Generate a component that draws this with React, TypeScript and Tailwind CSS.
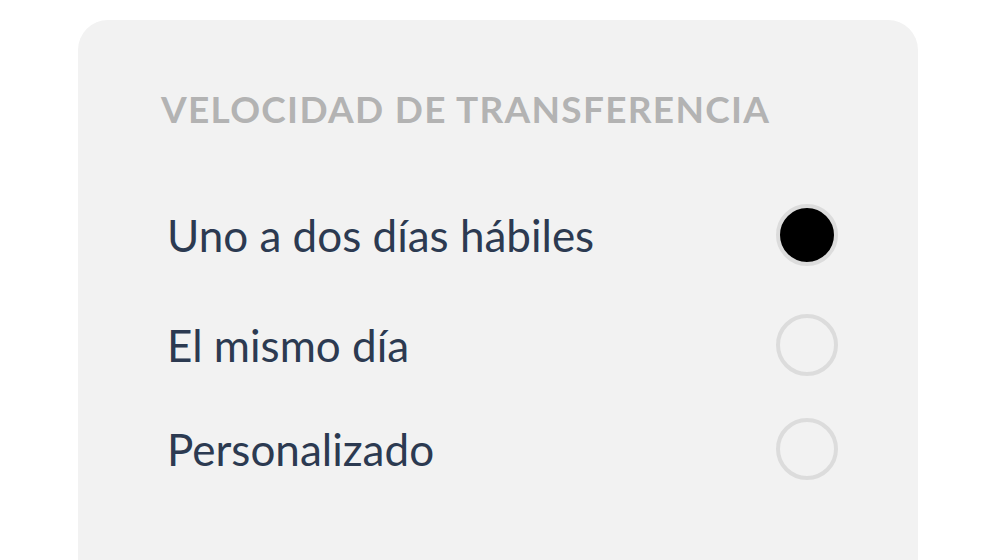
import React, { useState } from "react";

const options = ["Uno a dos días hábiles", "El mismo día", "Personalizado"];

const App: React.FC = () => {
  const [selected, setSelected] = useState<number>(0);

  return (
    <div className="min-h-[560px] bg-white pt-[20px] px-[78px] font-['Lato','Liberation_Sans',sans-serif]">
      <div className="bg-[#f2f2f2] rounded-[30px] h-[600px] pl-[83px] pr-[80px] pt-[70px]">
        <h2 className="text-[37px] leading-none font-bold tracking-[1.3px] text-[#b3b3b3] uppercase">
          Velocidad de transferencia
        </h2>
        <div className="flex flex-col mt-[56px]">
          {options.map((label, i) => (
            <button
              key={label}
              onClick={() => setSelected(i)}
              className={
                i === 0
                  ? "flex items-center justify-between h-[104px] mb-[6px] text-left"
                  : "flex items-center justify-between h-[104px] text-left"
              }
            >
              <span className="pl-[6px] text-[44px] leading-none text-[#2c3a51]">{label}</span>
              <span
                className={
                  selected === i
                    ? "w-[62px] h-[62px] rounded-full border-[4px] border-[#dcdcdc] bg-black"
                    : "w-[62px] h-[62px] rounded-full border-[4px] border-[#dcdcdc]"
                }
              />
            </button>
          ))}
        </div>
      </div>
    </div>
  );
};

export default App;
